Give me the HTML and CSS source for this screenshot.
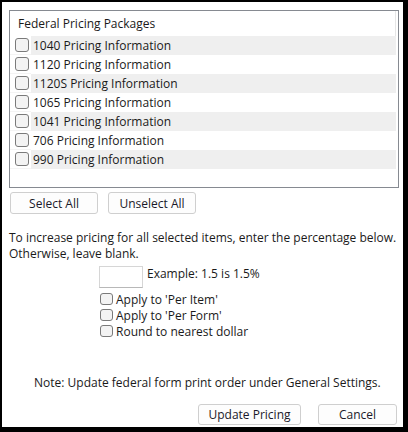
FILE: index.html
```html
<!DOCTYPE html>
<html>
<head>
<meta charset="utf-8">
<link rel="stylesheet" href="styles.css">
</head>
<body>
<div class="window">
  <div class="listbox">
    <div class="list-header">Federal Pricing Packages</div>
    <div class="rows">
      <label class="row alt"><span class="cbcell"><input type="checkbox" class="cb"></span><span class="rtext">1040 Pricing Information</span></label>
      <label class="row"><span class="cbcell"><input type="checkbox" class="cb"></span><span class="rtext">1120 Pricing Information</span></label>
      <label class="row alt"><span class="cbcell"><input type="checkbox" class="cb"></span><span class="rtext">1120S Pricing Information</span></label>
      <label class="row"><span class="cbcell"><input type="checkbox" class="cb"></span><span class="rtext">1065 Pricing Information</span></label>
      <label class="row alt"><span class="cbcell"><input type="checkbox" class="cb"></span><span class="rtext">1041 Pricing Information</span></label>
      <label class="row"><span class="cbcell"><input type="checkbox" class="cb"></span><span class="rtext">706 Pricing Information</span></label>
      <label class="row alt"><span class="cbcell"><input type="checkbox" class="cb"></span><span class="rtext">990 Pricing Information</span></label>
    </div>
  </div>
  <div class="select-buttons">
    <button class="btn btn-sel">Select All</button>
    <button class="btn btn-sel">Unselect All</button>
  </div>
  <p class="instructions">To increase pricing for all selected items, enter the percentage below. Otherwise, leave blank.</p>
  <div class="options">
    <div class="pct-row">
      <input type="text" class="pct">
      <span class="example">Example: 1.5 is 1.5%</span>
    </div>
    <label class="opt"><input type="checkbox" class="cb cb-opt"><span>Apply to 'Per Item'</span></label>
    <label class="opt"><input type="checkbox" class="cb cb-opt"><span>Apply to 'Per Form'</span></label>
    <label class="opt"><input type="checkbox" class="cb cb-opt"><span>Round to nearest dollar</span></label>
  </div>
  <p class="note">Note: Update federal form print order under General Settings.</p>
  <div class="footer">
    <button class="btn btn-update">Update Pricing</button>
    <button class="btn btn-cancel">Cancel</button>
  </div>
</div>
</body>
</html>
```

FILE: styles.css
```css
html, body {
  margin: 0;
  padding: 0;
  background: #000;
}
body {
  width: 408px;
  height: 432px;
  overflow: hidden;
  font-family: "Open Sans", "Noto Sans", "DejaVu Sans", sans-serif;
  font-size: 12px;
  color: #1a1a1a;
}
.window {
  margin: 2px 0 0 2px;
  width: 401px;
  height: 425px;
  background: #fff;
  display: flex;
  flex-direction: column;
}
.listbox {
  margin: 8px 0 0 7px;
  width: 388px;
  height: 176px;
  border: 1px solid #868a91;
  display: flex;
  flex-direction: column;
}
.list-header {
  height: 25px;
  line-height: 25px;
  padding-left: 8px;
  margin-right: 2px;
  border-right: 1px solid #e6e6e6;
  box-sizing: border-box;
}
.rows {
  display: flex;
  flex-direction: column;
  margin-right: 2px;
}
.row {
  display: flex;
  align-items: center;
  height: 19px;
}
.cbcell {
  width: 21px;
  height: 19px;
  display: flex;
  align-items: center;
  justify-content: flex-end;
  padding-right: 2px;
  box-sizing: border-box;
  border-bottom: 1px solid #f4f4f4;
}
.rtext {
  flex: 1;
  height: 19px;
  line-height: 19px;
  padding-left: 2px;
}
.row.alt .rtext {
  background: #efefef;
}
.cb {
  appearance: none;
  -webkit-appearance: none;
  margin: 0;
  width: 14px;
  height: 14px;
  border: 1px solid #7a7a7a;
  border-radius: 3px;
  background: #f3f3f3;
  box-sizing: border-box;
  flex: none;
}
.cb-opt {
  width: 13px;
  height: 12px;
  margin-left: 1px;
}
.select-buttons {
  display: flex;
  gap: 10px;
  margin: 4px 0 0 8px;
}
.btn {
  font-family: inherit;
  font-size: 12px;
  color: #1a1a2a;
  background: #fdfdfd;
  border: 1px solid #cfcfcf;
  border-radius: 3px;
  padding: 0;
  margin: 0;
}
.btn-sel {
  width: 88px;
  height: 22px;
}
.instructions {
  margin: 16px 6px 0 7px;
  line-height: 16px;
}
.options {
  margin: 4px 0 0 97px;
  display: flex;
  flex-direction: column;
}
.pct-row {
  display: flex;
  align-items: flex-start;
  gap: 4px;
  margin-bottom: 3px;
}
.pct {
  width: 44px;
  height: 22px;
  box-sizing: border-box;
  border: 1px solid #d6d6d6;
  border-bottom-color: #b8b8b8;
  margin: 0;
  padding: 0;
}
.example {
  line-height: 14px;
  margin-top: 1px;
}
.opt {
  display: flex;
  align-items: center;
  gap: 3px;
  height: 16px;
}
.note {
  margin: 36px 0 0 32px;
  line-height: 16px;
}
.footer {
  display: flex;
  justify-content: flex-end;
  gap: 17px;
  margin: 13px 6px 0 0;
}
.btn-update {
  width: 103px;
  height: 21px;
}
.btn-cancel {
  width: 79px;
  height: 21px;
}
```
